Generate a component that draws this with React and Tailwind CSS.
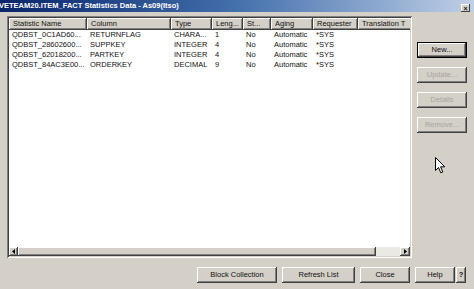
import React from "react";

const cols = [
  { name: "Statistic Name", w: "w-[78px]" },
  { name: "Column", w: "w-[84px]" },
  { name: "Type", w: "w-[41px]" },
  { name: "Leng...", w: "w-[31px]" },
  { name: "St...", w: "w-[28px]" },
  { name: "Aging", w: "w-[42px]" },
  { name: "Requester", w: "w-[45px]" },
  { name: "Translation T", w: "w-[70px]" },
];

const rows = [
  ["QDBST_0C1AD60...", "RETURNFLAG", "CHARA...", "1", "No", "Automatic", "*SYS", ""],
  ["QDBST_28602600...", "SUPPKEY", "INTEGER", "4", "No", "Automatic", "*SYS", ""],
  ["QDBST_62018200...", "PARTKEY", "INTEGER", "4", "No", "Automatic", "*SYS", ""],
  ["QDBST_84AC3E00...", "ORDERKEY", "DECIMAL", "9", "No", "Automatic", "*SYS", ""],
];

function Btn({ label, w, disabled, isDefault }) {
  if (isDefault) {
    return (
      <div className={`${w} h-[16px] border border-black`}>
        <div className="h-full w-full flex items-center justify-center bg-[#d4d0c8] shadow-[inset_-1px_-1px_#404040,inset_1px_1px_#ffffff,inset_-2px_-2px_#808080]">
          {label}
        </div>
      </div>
    );
  }
  return (
    <div
      className={`${w} h-[16px] flex items-center justify-center bg-[#d4d0c8] shadow-[inset_-1px_-1px_#404040,inset_1px_1px_#ffffff,inset_-2px_-2px_#808080,inset_2px_2px_#d4d0c8] ${
        disabled ? "text-[#a8a49c]" : "text-[#111]"
      }`}
    >
      {label}
    </div>
  );
}

export default function App() {
  return (
    <div className="w-[474px] h-[289px] overflow-hidden bg-[#d4d0c8] flex flex-col font-['Liberation_Sans',Arial,sans-serif] text-[7.5px] leading-none text-[#111] select-none">
      {/* title bar */}
      <div className="h-[12px] shrink-0 flex items-center bg-gradient-to-r from-[#0a246a] via-[#4470ac] to-[#c0d0e6] pr-[4px]">
        <span className="text-white font-bold text-[7.5px] -ml-[1px] whitespace-nowrap">
          VETEAM20.ITEM_FACT Statistics Data - As09(Itso)
        </span>
        <div className="ml-auto mt-[4px] w-[9px] h-[8px] bg-[#d4d0c8] flex items-center justify-center text-[7px] font-bold shadow-[inset_-1px_-1px_#404040,inset_1px_1px_#ffffff]">
          ×
        </div>
      </div>

      {/* body */}
      <div className="flex pt-[4px] pl-[7px]">
        {/* list */}
        <div className="w-[405px] h-[242px] shrink-0 flex flex-col bg-white shadow-[inset_1px_1px_#808080,inset_-1px_-1px_#ffffff,inset_2px_2px_#404040,inset_-2px_-2px_#d4d0c8] p-[2px]">
          <div className="flex-1 overflow-hidden">
            <div className="flex h-[12px] w-[460px]">
              {cols.map((c) => (
                <div
                  key={c.name}
                  className={`${c.w} shrink-0 h-full flex items-center pl-[4px] bg-[#d4d0c8] whitespace-nowrap shadow-[inset_-1px_-1px_#404040,inset_1px_1px_#ffffff,inset_-2px_-2px_#808080]`}
                >
                  {c.name}
                </div>
              ))}
            </div>
            {rows.map((r, i) => (
              <div key={i} className="flex h-[10px] w-[460px]">
                {r.map((v, j) => (
                  <div
                    key={j}
                    className={`${cols[j].w} shrink-0 h-full flex items-center pl-[3px] whitespace-nowrap`}
                  >
                    {v}
                  </div>
                ))}
              </div>
            ))}
          </div>
          {/* horizontal scrollbar */}
          <div className="h-[9px] flex bg-[#ebe9e4]">
            <div className="w-[9px] h-full flex items-center justify-center bg-[#d4d0c8] shadow-[inset_-1px_-1px_#404040,inset_1px_1px_#ffffff,inset_-2px_-2px_#808080]">
              <svg width="3" height="5" viewBox="0 0 3 5">
                <path d="M3 0 L0 2.5 L3 5 Z" fill="#000" />
              </svg>
            </div>
            <div className="w-[358px] h-full bg-[#d4d0c8] shadow-[inset_-1px_-1px_#404040,inset_1px_1px_#ffffff,inset_-2px_-2px_#808080]" />
            <div className="flex-1" />
            <div className="w-[10px] h-full flex items-center justify-center bg-[#d4d0c8] shadow-[inset_-1px_-1px_#404040,inset_1px_1px_#ffffff,inset_-2px_-2px_#808080]">
              <svg width="3" height="5" viewBox="0 0 3 5">
                <path d="M0 0 L3 2.5 L0 5 Z" fill="#000" />
              </svg>
            </div>
          </div>
        </div>

        {/* right buttons */}
        <div className="relative flex-1 flex flex-col pl-[5px] pt-[26px] gap-[9px]">
          <Btn label="New..." w="w-[50px]" isDefault />
          <Btn label="Update..." w="w-[50px]" disabled />
          <Btn label="Details" w="w-[50px]" disabled />
          <Btn label="Remove..." w="w-[50px]" disabled />
          <svg
            className="absolute left-[23px] top-[141px]"
            width="11"
            height="17"
            viewBox="0 0 11 17"
          >
            <path
              d="M0.5 0.5 L0.5 13.5 L3.5 10.5 L5.8 15.8 L7.8 15 L5.6 9.8 L9.8 9.8 Z"
              fill="#fff"
              stroke="#000"
              strokeWidth="1"
            />
          </svg>
        </div>
      </div>

      {/* bottom buttons */}
      <div className="flex justify-end pr-[8px] pt-[9px]">
        <div className="flex gap-[5px]">
          <Btn label="Block Collection" w="w-[80px]" />
          <Btn label="Refresh List" w="w-[73px]" />
          <Btn label="Close" w="w-[50px]" />
          <div className="flex gap-[1px]">
            <Btn label="Help" w="w-[40px]" />
            <Btn label={<span className="font-bold">?</span>} w="w-[10px]" />
          </div>
        </div>
      </div>
    </div>
  );
}
